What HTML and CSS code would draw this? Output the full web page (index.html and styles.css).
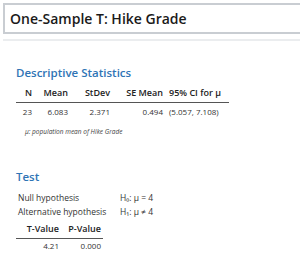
FILE: index.html
```html
<!DOCTYPE html>
<html>
<head>
<meta charset="utf-8">
<link rel="stylesheet" href="styles.css">
</head>
<body>
<div class="title-box"><span class="title">One-Sample T: Hike Grade</span></div>
<div class="sep"></div>
<section class="desc">
  <h2 class="sec-title">Descriptive Statistics</h2>
  <table class="stats">
    <thead>
      <tr><th class="c-n">N</th><th class="c-mean">Mean</th><th class="c-sd">StDev</th><th class="c-se">SE Mean</th><th class="c-ci">95% CI for μ</th></tr>
    </thead>
    <tbody>
      <tr><td>23</td><td>6.083</td><td>2.371</td><td>0.494</td><td class="ci">(5.057, 7.108)</td></tr>
    </tbody>
  </table>
  <p class="note">μ: population mean of Hike Grade</p>
</section>
<section class="test">
  <h2 class="sec-title">Test</h2>
  <div class="hyp">
    <div class="hyp-row"><span class="hyp-label">Null hypothesis</span><span>H₀: μ = 4</span></div>
    <div class="hyp-row"><span class="hyp-label">Alternative hypothesis</span><span>H₁: μ ≠ 4</span></div>
  </div>
  <table class="stats tv">
    <thead><tr><th class="c-t">T-Value</th><th class="c-p">P-Value</th></tr></thead>
    <tbody><tr><td>4.21</td><td>0.000</td></tr></tbody>
  </table>
</section>
</body>
</html>
```
FILE: styles.css
```css
html, body { margin: 0; padding: 0; background: #fff; }
body { font-family: "Open Sans", "Noto Sans", sans-serif; color: #222; width: 300px; height: 263px; overflow: hidden; }
.title-box {
  margin: 3px 0 0 3px;
  height: 27px;
  border: 2px solid #c9cdd2;
  border-right: none;
  display: flex;
  align-items: center;
  padding-left: 5px;
}
.title { font-size: 14px; font-weight: 600; color: #1a1a1a; }
.sep { margin: 5px 0 0 3px; height: 2px; background: #ebedef; }
.desc { padding: 24px 0 0 16px; }
.sec-title { margin: 0; font-size: 11.5px; font-weight: 600; color: #2f74b5; line-height: 16px; }
.stats { border-collapse: collapse; font-size: 9px; margin-top: 6px; }
.stats th { font-weight: 600; color: #222; padding: 0 0 3px; border-bottom: 1px solid #555; text-align: right; line-height: 12px; }
.stats td { padding: 4px 0 0; text-align: right; color: #333; line-height: 10px; font-size: 8px; }
.stats td.ci { text-align: left; padding-left: 6px; }
.c-n { width: 16px; }
.c-mean { width: 36px; }
.c-sd { width: 42px; }
.c-se { width: 53px; }
.c-ci { text-align: left !important; padding-left: 6px !important; width: 60px; }
.note { margin: 10px 0 0 9px; font-size: 6.5px; font-style: italic; color: #444; }
.test { padding: 33px 0 0 16px; }
.hyp { margin-top: 7px; font-size: 8.5px; color: #333; display: flex; flex-direction: column; gap: 2px; line-height: 12px; }
.hyp-row { display: flex; }
.hyp-label { width: 102px; padding-left: 2px; }
.tv { margin-top: 5px; }
.tv td { padding-top: 2px; }
.c-t { width: 43px; }
.c-p { width: 42px; padding-right: 2px !important; }
.tv td:last-child { padding-right: 2px; }
```
